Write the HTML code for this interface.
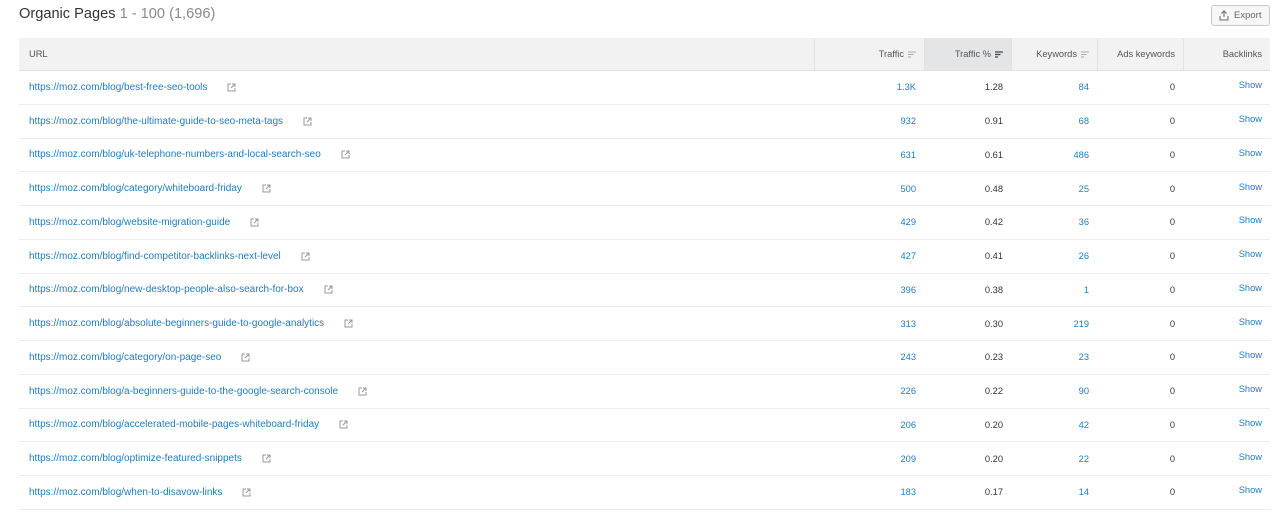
<!DOCTYPE html>
<html><head><meta charset="utf-8"><style>
*{margin:0;padding:0;box-sizing:border-box}
body{width:1280px;height:520px;background:#fff;font-family:"Liberation Sans",sans-serif;overflow:hidden;position:relative;color:#333}
.title{position:absolute;left:19px;top:6px;font-size:14.6px;color:#333}
.title span{color:#8a8a8a}
.export{position:absolute;left:1211px;top:5px;width:59px;height:21px;border:1px solid #c9c9c9;border-radius:3px;background:#f7f7f7;font-size:9.5px;color:#666;padding-left:22px;line-height:19px}
.export svg{position:absolute;left:7px;top:4px}
.tbl{position:absolute;left:19px;top:38px;width:1251px}
.row{display:flex;height:33.75px;border-bottom:1px solid #ececec;font-size:9.3px;align-items:center}
.hd{height:33px;background:#f2f2f2;color:#555;border-bottom:1px solid #e0e0e0}
.c{height:100%;display:flex;align-items:center;justify-content:flex-end;padding-right:8px}
.u{width:795px;justify-content:flex-start;padding-left:10px}
.row:not(.hd) .u{font-size:10px}
.t{width:110px}.tp{width:87px}.k{width:86px}.a{width:86px}.b{width:87px}
.hd .c{border-left:1px solid #e2e2e2}.hd .u{border-left:none}
.hd .tp{background:#e4e5e6}
a{color:#1f7bbf;text-decoration:none}
.ic{margin-left:20px;display:inline-block;width:9px;height:9px}
.row:not(.hd) .b{align-items:center;padding-bottom:4px}
.s{display:inline-block;width:8px;height:7px;margin-left:4px;vertical-align:middle}
</style></head><body>
<div class="title">Organic Pages <span>1 - 100 (1,696)</span></div>
<div class="export"><svg width="10" height="11" viewBox="0 0 10 11"><path d="M5 1v6M2.5 3.5L5 1l2.5 2.5M1 6v4h8V6" fill="none" stroke="#666" stroke-width="1"/></svg>Export</div>
<div class="tbl">
<div class="row hd"><div class="c u">URL</div><div class="c t">Traffic<svg class="s" viewBox="0 0 8 7"><path d="M0 1h8M0 3.5h5.5M0 6h3" stroke="#aaa" stroke-width="1"/></svg></div><div class="c tp">Traffic %<svg class="s" viewBox="0 0 8 7"><path d="M0 1h8M0 3.5h5.5M0 6h3" stroke="#444" stroke-width="1.2"/></svg></div><div class="c k">Keywords<svg class="s" viewBox="0 0 8 7"><path d="M0 1h8M0 3.5h5.5M0 6h3" stroke="#aaa" stroke-width="1"/></svg></div><div class="c a">Ads keywords</div><div class="c b">Backlinks</div></div>
</div>
<script>
var d=[["best-free-seo-tools","1.3K","1.28","84"],["the-ultimate-guide-to-seo-meta-tags","932","0.91","68"],["uk-telephone-numbers-and-local-search-seo","631","0.61","486"],["category/whiteboard-friday","500","0.48","25"],["website-migration-guide","429","0.42","36"],["find-competitor-backlinks-next-level","427","0.41","26"],["new-desktop-people-also-search-for-box","396","0.38","1"],["absolute-beginners-guide-to-google-analytics","313","0.30","219"],["category/on-page-seo","243","0.23","23"],["a-beginners-guide-to-the-google-search-console","226","0.22","90"],["accelerated-mobile-pages-whiteboard-friday","206","0.20","42"],["optimize-featured-snippets","209","0.20","22"],["when-to-disavow-links","183","0.17","14"]];
var ic='<svg class="ic" viewBox="0 0 9 9"><path d="M4 1H1v7h7V5M5 1h3v3M8 1L4 5" fill="none" stroke="#999" stroke-width="1"/></svg>';
var h='';d.forEach(function(r){h+='<div class="row"><div class="c u"><a>https://moz.com/blog/'+r[0]+'</a>'+ic+'</div><div class="c t"><a>'+r[1]+'</a></div><div class="c tp">'+r[2]+'</div><div class="c k"><a>'+r[3]+'</a></div><div class="c a">0</div><div class="c b"><a>Show</a></div></div>'});
document.querySelector('.tbl').insertAdjacentHTML('beforeend',h);
</script>
</body></html>
